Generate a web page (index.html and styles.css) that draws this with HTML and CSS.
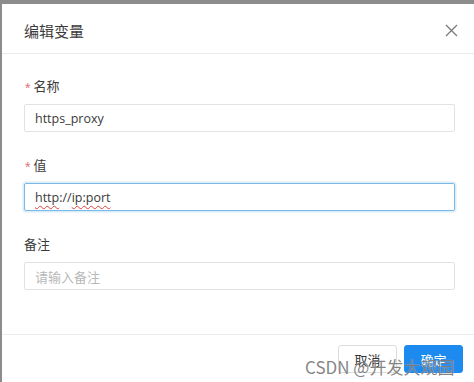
FILE: index.html
```html
<!DOCTYPE html>
<html lang="zh-CN">
<head>
<meta charset="utf-8">
<title>编辑变量</title>
<link rel="stylesheet" href="styles.css">
</head>
<body>
<div class="dialog">
  <div class="header">
    <div class="title">编辑变量</div>
    <svg class="close" width="13" height="13" viewBox="0 0 13 13"><path d="M1 1L12 12M12 1L1 12" stroke="#7a7a7a" stroke-width="1.3" fill="none"/></svg>
  </div>
  <div class="body">
    <div class="item">
      <div class="label"><span class="req">*</span>名称</div>
      <div class="input">https_proxy</div>
    </div>
    <div class="item">
      <div class="label"><span class="req">*</span>值</div>
      <div class="input focused"><span class="spell">http</span>://<span class="spell">ip:port</span></div>
    </div>
    <div class="item">
      <div class="label">备注</div>
      <div class="input placeholder">请输入备注</div>
    </div>
  </div>
  <div class="footer">
    <div class="btn">取消</div>
    <div class="btn primary">确定</div>
    <div class="watermark">CSDN @开发大观园</div>
  </div>
</div>
</body>
</html>
```

FILE: styles.css
```css
html, body {
  margin: 0;
  padding: 0;
  background: #ffffff;
}
body {
  font-family: "Noto Sans", "Noto Sans CJK SC", sans-serif;
  color: #444;
}
.dialog {
  width: 474px;
  height: 382px;
  box-sizing: border-box;
  border-top: 4px solid #8c8c8c;
  border-left: 2px solid #8c8c8c;
  display: flex;
  flex-direction: column;
  background: #fff;
}
.header {
  height: 50px;
  box-sizing: border-box;
  border-bottom: 1px solid #e9e9e9;
  display: flex;
  align-items: center;
  justify-content: space-between;
  padding: 4px 16px 0 22px;
}
.title {
  font-family: "Noto Sans CJK SC", sans-serif;
  font-size: 15px;
  color: #3a3a3a;
  line-height: 20px;
}
.close {
  display: block;
}
.body {
  padding: 22px 19px 0 22px;
  flex: 1;
}
.item {
  margin-bottom: 23px;
}
.label {
  font-family: "Noto Sans CJK SC", sans-serif;
  font-size: 13px;
  line-height: 20px;
  height: 20px;
  color: #3c3c3c;
  margin-bottom: 8px;
  display: flex;
  align-items: center;
}
.req {
  color: #e0707a;
  font-family: "Liberation Sans", sans-serif;
  font-size: 14px;
  margin: 0 3px 0 1px;
  padding-top: 4px;
}
.input {
  height: 28px;
  box-sizing: border-box;
  border: 1px solid #e2e2e2;
  border-radius: 2px;
  padding: 0 10px;
  display: flex;
  align-items: center;
  font-family: "Open Sans", "Noto Sans CJK SC", sans-serif;
  font-size: 12.5px;
  color: #3a3a3a;
  white-space: pre;
}
.input.focused {
  border-color: #7ab8e8;
  box-shadow: 0 0 0 1.5px rgba(110, 180, 235, 0.25);
}
.spell {
  text-decoration: underline wavy #e0403a;
  text-decoration-thickness: 1px;
  text-underline-offset: 3px;
}
.input.placeholder {
  font-family: "Noto Sans CJK SC", sans-serif;
  font-size: 13px;
  color: #b8b8b8;
}
.footer {
  position: relative;
  height: 48px;
  box-sizing: border-box;
  border-top: 1px solid #ececec;
  display: flex;
  justify-content: flex-end;
  align-items: flex-start;
  gap: 7px;
  padding: 10px 11px 0 0;
}
.btn {
  width: 59px;
  height: 28px;
  box-sizing: border-box;
  border: 1px solid #dcdcdc;
  border-radius: 3px;
  display: flex;
  align-items: center;
  justify-content: center;
  font-family: "Noto Sans CJK SC", sans-serif;
  font-size: 13px;
  color: #333;
  background: #fff;
}
.btn.primary {
  background: #1d8af0;
  border-color: #1d8af0;
  color: #fff;
}
.watermark {
  position: absolute;
  left: 303px;
  top: 21px;
  font-family: "Noto Sans CJK SC", sans-serif;
  font-size: 17px;
  line-height: 22px;
  color: rgba(110, 110, 110, 0.85);
  white-space: nowrap;
  text-shadow: 0 0 1px rgba(255, 255, 255, 0.6);
}
```
